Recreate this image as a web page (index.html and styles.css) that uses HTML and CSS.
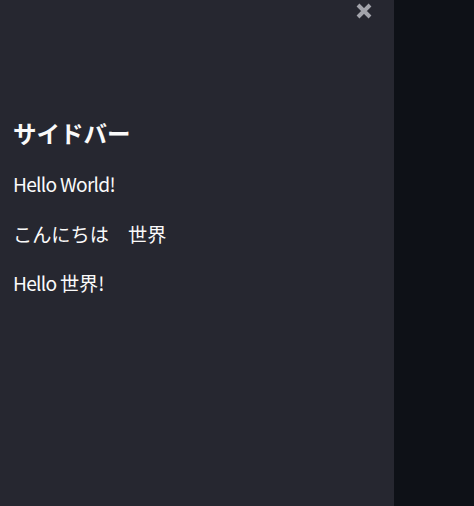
FILE: index.html
```html
<!DOCTYPE html>
<html lang="ja">
<head>
<meta charset="utf-8">
<link rel="stylesheet" href="styles.css">
</head>
<body>
<div class="app">
  <aside class="sidebar">
    <button class="close" aria-label="閉じる">
      <svg viewBox="0 0 16 16" width="16" height="16">
        <path d="M2 2 L14 14 M14 2 L2 14" stroke="currentColor" stroke-width="4" fill="none"/>
      </svg>
    </button>
    <h2 class="title">サイドバー</h2>
    <p class="text"><span class="latin">Hello World!</span></p>
    <p class="text">こんにちは　世界</p>
    <p class="text"><span class="latin">Hello </span>世界<span class="latin">!</span></p>
  </aside>
  <main class="main"></main>
</div>
</body>
</html>
```
FILE: styles.css
```css
html, body {
  margin: 0;
  padding: 0;
  height: 100%;
}
body {
  background: #0e1117;
  font-family: "Noto Sans CJK JP", "Noto Sans", sans-serif;
  color: #fafafa;
}
.app {
  display: flex;
  height: 506px;
}
.sidebar {
  position: relative;
  width: 394px;
  flex: none;
  background: #262730;
  box-sizing: border-box;
  padding: 119px 12px 0 13px;
}
.main {
  flex: 1;
  background: #0e1117;
}
.close {
  position: absolute;
  top: 3px;
  left: 356px;
  width: 16px;
  height: 16px;
  padding: 0;
  border: 0;
  background: none;
  color: #a3a4ab;
  display: block;
}
.close svg {
  display: block;
}
.title {
  margin: 0 0 22px 0;
  font-size: 23.5px;
  font-weight: 700;
  line-height: 28px;
}
.text {
  margin: 0 0 19px 0;
  font-size: 19.2px;
  line-height: 30.7px;
}
.latin {
  letter-spacing: -0.75px;
}
```
